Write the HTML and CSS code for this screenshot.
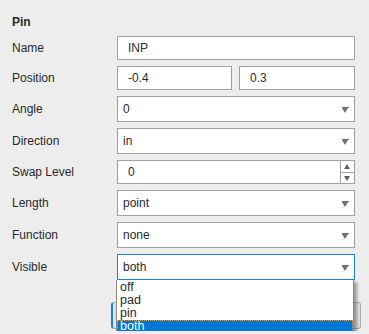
FILE: index.html
```html
<!DOCTYPE html>
<html lang="en">
<head>
	<meta charset="UTF-8">
	<title>Pin properties</title>
	<link rel="stylesheet" href="styles.css">
</head>
<body>
	<div class="panel">
		<h3 class="title">Pin</h3>
		<div class="form">
			<label>Name</label>
			<div class="field"><div class="text">INP</div></div>

			<label>Position</label>
			<div class="field pair">
				<div class="text">-0.4</div>
				<div class="text">0.3</div>
			</div>

			<label>Angle</label>
			<div class="field"><div class="select">0<span class="arrow"></span></div></div>

			<label>Direction</label>
			<div class="field"><div class="select">in<span class="arrow"></span></div></div>

			<label>Swap Level</label>
			<div class="field">
				<div class="spin">
					<span class="spin-val">0</span>
					<span class="spin-btns">
						<span class="up"></span>
						<span class="down"></span>
					</span>
				</div>
			</div>

			<label>Length</label>
			<div class="field"><div class="select">point<span class="arrow"></span></div></div>

			<label>Function</label>
			<div class="field"><div class="select">none<span class="arrow"></span></div></div>

			<label>Visible</label>
			<div class="field drop-host">
				<div class="select focus">both<span class="arrow"></span></div>
				<!-- popup list over the button -->
				<ul class="droplist">
					<li>off</li>
					<li>pad</li>
					<li>pin</li>
					<li class="sel">both</li>
				</ul>
			</div>
		</div>
		<div class="btnrow"><button class="btn"></button></div>
	</div>
</body>
</html>
```

FILE: styles.css
```css
*{margin: 0;padding: 0;box-sizing: border-box;}
body{
	background: #ededed;
	font-family: "Liberation Sans", Arial, sans-serif;
	font-size: 12px;
	color: #2a2a2a;
}
.panel{
	padding: 14px 0 0 12px;
	width: 355px;
}
.title{
	font-size: 12px;
	font-weight: bold;
	line-height: 17px;
	height: 22px;
}
.form{
	display: grid;
	grid-template-columns: 105px 238px;
	row-gap: 6px;
	align-items: center;
}
.form label{
	line-height: 14px;
}
.text{
	height: 24px;
	background: #fff;
	border: 1px solid #a0a0a0;
	padding-left: 10px;
	line-height: 22px;
}
.pair{
	display: flex;
	gap: 7px;
}
.pair .text:first-child{width: 115px;}
.pair .text:last-child{flex: 1;}

.select{
	position: relative;
	height: 26px;
	background: #fff;
	border: 1px solid #a0a0a0;
	padding-left: 5px;
	line-height: 24px;
}
.select.focus{
	border-color: #1a84d6;
}
.arrow{
	position: absolute;
	right: 5px;
	top: 10px;
	width: 7px;
	height: 6px;
	border-top: 1px solid #707070;
}
.arrow:after{
	content: "";
	position: absolute;
	left: 0;
	top: 0;
	border-left: 3.5px solid transparent;
	border-right: 3.5px solid transparent;
	border-top: 5px solid #707070;
}

.spin{
	display: flex;
	height: 24px;
	background: #fff;
	border: 1px solid #a0a0a0;
}
.spin-val{
	flex: 1;
	padding-left: 10px;
	line-height: 22px;
}
.spin-btns{
	width: 14px;
	border-left: 1px solid #a0a0a0;
	display: flex;
	flex-direction: column;
}
.spin-btns span{
	flex: 1;
	position: relative;
}
.spin-btns .up{border-bottom: 1px solid #a0a0a0;}
.spin-btns span:after{
	content: "";
	position: absolute;
	left: 3px;
	top: 3px;
	border-left: 3.5px solid transparent;
	border-right: 3.5px solid transparent;
}
.spin-btns .up:after{border-bottom: 5px solid #606060;}
.spin-btns .down:after{border-top: 5px solid #606060;}

.drop-host{
	position: relative;
}
.droplist{
	position: absolute;
	left: -1px;
	top: 26px;
	width: 238px;
	background: #fff;
	border: 1px solid #8a8a8a;
	border-top: none;
	list-style: none;
	font-size: 12.5px;
	box-shadow: 3px 2px 3px rgba(0,0,0,0.35);
	z-index: 2;
}
.droplist li{
	height: 13px;
	line-height: 13px;
	padding-left: 3px;
}
.droplist li:first-child{
	margin-top: 1px;
}
.droplist li.sel{
	background: #0078d7;
	color: #fff;
	outline: 1px dotted #f0a030;
	outline-offset: -1px;
	height: 14px;
}

.btnrow{
	margin-top: 22px;
	padding-left: 99px;
}
.btn{
	width: 250px;
	height: 27px;
	background: #e1e1e1;
	border: 1px solid #adadad;
	border-left: 2px solid #1a84d6;
	border-radius: 3px;
	font-family: inherit;
	font-size: 12px;
	color: #222;
}
```
